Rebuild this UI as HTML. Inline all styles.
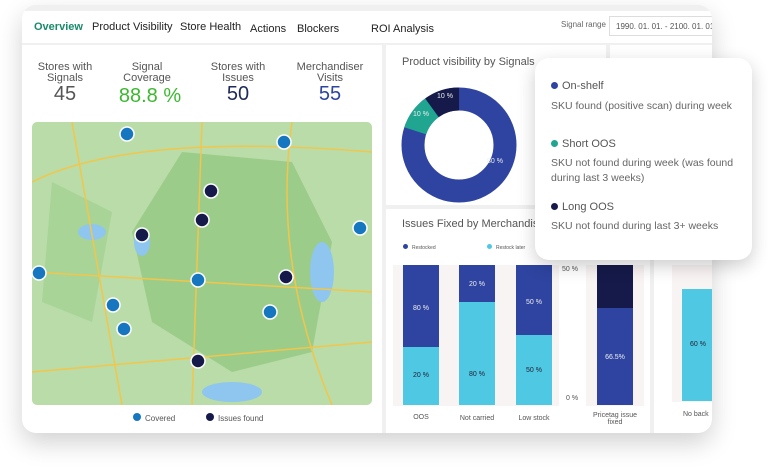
<!DOCTYPE html>
<html><head><style>
*{margin:0;padding:0;box-sizing:border-box}
body{width:768px;height:475px;background:#fff;font-family:"Liberation Sans",sans-serif;position:relative;overflow:hidden}
.card{position:absolute;left:22px;top:5px;width:690px;height:428px;background:#f0f0f0;border-radius:14px;box-shadow:0 10px 25px rgba(0,0,0,.18);overflow:hidden}
.nav{position:absolute;left:0;top:6px;width:690px;height:32px;background:#fff}
.nav span{position:absolute;top:10px;font-size:11px;color:#222}
.p{position:absolute;background:#fff}
.t{position:absolute;font-size:11px;color:#555;text-align:center;line-height:11px}
.n{position:absolute;font-size:20px;text-align:center}
.bl{position:absolute;font-size:7px;color:#eee;text-align:center;width:36px}
.lb{position:absolute;font-size:7px;color:#555;text-align:center}
.pop{position:absolute;left:535px;top:58px;width:217px;height:202px;background:#fff;border-radius:14px;box-shadow:0 6px 18px rgba(0,0,0,.2)}
.pop div{position:absolute;left:16px;font-size:10.5px;color:#666}
.dot{display:inline-block;width:7px;height:7px;border-radius:50%;margin-right:4px}
</style></head><body>
<div class="card">
<div class="nav">
<span style="left:12px;color:#1a8a6a;font-weight:bold">Overview</span>
<span style="left:70px">Product Visibility</span>
<span style="left:158px">Store Health</span>
<span style="left:228px;top:12px">Actions</span>
<span style="left:275px;top:12px">Blockers</span>
<span style="left:349px;top:12px">ROI Analysis</span>
<span style="left:539px;font-size:8px;color:#666;top:9px">Signal range</span>
<div style="position:absolute;left:587px;top:5px;width:110px;height:20px;border:1px solid #ddd;font-size:8px;color:#555;padding:5px 6px;white-space:nowrap;overflow:hidden">1990. 01. 01. - 2100. 01. 01</div>
</div>
<div class="p" style="left:0;top:40px;width:360px;height:390px"></div>
<div class="p" style="left:364px;top:40px;width:220px;height:160px"></div>
<div class="p" style="left:588px;top:40px;width:110px;height:160px"></div>
<div class="p" style="left:364px;top:204px;width:264px;height:230px"></div>
<div class="p" style="left:632px;top:204px;width:70px;height:230px"></div>
</div>
<div class="t" style="left:30px;top:62px;width:70px">Stores with<br>Signals</div>
<div class="n" style="left:30px;top:83px;width:70px;color:#555">45</div>
<div class="t" style="left:112px;top:62px;width:70px">Signal<br>Coverage</div>
<div class="n" style="left:110px;top:85px;width:80px;color:#3cb830">88.8 %</div>
<div class="t" style="left:203px;top:62px;width:70px">Stores with<br>Issues</div>
<div class="n" style="left:203px;top:83px;width:70px;color:#1e2a5a">50</div>
<div class="t" style="left:290px;top:62px;width:80px">Merchandiser<br>Visits</div>
<div class="n" style="left:290px;top:83px;width:80px;color:#2e44a0">55</div>
<svg style="position:absolute;left:32px;top:122px;border-radius:5px" width="340" height="283">
<rect width="340" height="283" fill="#b9dca8"/>
<path d="M150 30 L260 40 L300 120 L280 230 L200 250 L120 200 L100 110Z" fill="#9ccc8a"/>
<path d="M20 60 L80 90 L60 200 L10 180Z" fill="#a8d498"/>
<ellipse cx="290" cy="150" rx="12" ry="30" fill="#8ec6ef"/>
<ellipse cx="200" cy="270" rx="30" ry="10" fill="#8ec6ef"/>
<ellipse cx="60" cy="110" rx="14" ry="8" fill="#8ec6ef"/>
<ellipse cx="110" cy="120" rx="8" ry="14" fill="#8ec6ef"/>
<g stroke="#f2c64a" stroke-width="1.5" fill="none">
<path d="M0 60 Q100 10 340 30"/><path d="M170 0 L160 283"/><path d="M0 150 L340 170"/><path d="M40 0 L90 283"/><path d="M260 0 Q240 140 300 283"/><path d="M0 250 L340 220"/>
</g>
<g stroke="#fff" stroke-width="1.5">
<circle cx="95" cy="12" r="7" fill="#1676c0"/><circle cx="252" cy="20" r="7" fill="#1676c0"/>
<circle cx="179" cy="69" r="7" fill="#161a4a"/><circle cx="170" cy="98" r="7" fill="#161a4a"/>
<circle cx="110" cy="113" r="7" fill="#161a4a"/><circle cx="328" cy="106" r="7" fill="#1676c0"/>
<circle cx="7" cy="151" r="7" fill="#1676c0"/><circle cx="166" cy="158" r="7" fill="#1676c0"/>
<circle cx="254" cy="155" r="7" fill="#161a4a"/><circle cx="81" cy="183" r="7" fill="#1676c0"/>
<circle cx="238" cy="190" r="7" fill="#1676c0"/><circle cx="92" cy="207" r="7" fill="#1676c0"/>
<circle cx="166" cy="239" r="7" fill="#161a4a"/>
</g>
</svg>
<div class="lb" style="left:133px;top:413px;font-size:8px"><span class="dot" style="background:#1676c0;width:8px;height:8px"></span>Covered</div>
<div class="lb" style="left:206px;top:413px;font-size:8px"><span class="dot" style="background:#161a4a;width:8px;height:8px"></span>Issues found</div>
<div style="position:absolute;left:402px;top:56px;font-size:11px;color:#555">Product visibility by Signals</div>
<svg style="position:absolute;left:400px;top:86px" width="120" height="120">
<circle cx="59" cy="59" r="46" fill="none" stroke="#2e44a0" stroke-width="23"/>
<circle cx="59" cy="59" r="46" fill="none" stroke="#1fa590" stroke-width="23" stroke-dasharray="28.9 400" transform="rotate(-162 59 59)"/>
<circle cx="59" cy="59" r="46" fill="none" stroke="#161a4a" stroke-width="23" stroke-dasharray="28.9 400" transform="rotate(-126 59 59)"/>
<text x="37" y="12" font-size="7" fill="#eee" font-family="Liberation Sans">10 %</text>
<text x="13" y="30" font-size="7" fill="#eee" font-family="Liberation Sans">10 %</text>
<text x="87" y="77" font-size="7" fill="#eee" font-family="Liberation Sans">80 %</text>
</svg>
<div style="position:absolute;left:402px;top:218px;font-size:11px;color:#555">Issues Fixed by Merchandiser</div>
<div class="lb" style="left:403px;top:244px;font-size:5px"><span class="dot" style="background:#2e44a0;width:5px;height:5px"></span>Restocked</div>
<div class="lb" style="left:487px;top:244px;font-size:5px"><span class="dot" style="background:#4fc8e4;width:5px;height:5px"></span>Restock later</div>
<div style="position:absolute;left:393px;top:265px;width:166px;height:141px;background:#f9f4f4"></div>
<div style="position:absolute;left:586px;top:265px;width:58px;height:141px;background:#f9f4f4"></div>
<div style="position:absolute;left:672px;top:265px;width:40px;height:137px;background:#f9f4f4"></div>
<div style="position:absolute;left:403px;top:265px;width:36px;height:82px;background:#2e44a0"></div>
<div style="position:absolute;left:403px;top:347px;width:36px;height:58px;background:#4fc8e4"></div>
<div style="position:absolute;left:459px;top:265px;width:36px;height:37px;background:#2e44a0"></div>
<div style="position:absolute;left:459px;top:302px;width:36px;height:103px;background:#4fc8e4"></div>
<div style="position:absolute;left:516px;top:265px;width:36px;height:70px;background:#2e44a0"></div>
<div style="position:absolute;left:516px;top:335px;width:36px;height:70px;background:#4fc8e4"></div>
<div style="position:absolute;left:597px;top:265px;width:36px;height:43px;background:#161a4a"></div>
<div style="position:absolute;left:597px;top:308px;width:36px;height:97px;background:#2e44a0"></div>
<div style="position:absolute;left:682px;top:289px;width:30px;height:112px;background:#4fc8e4"></div>
<div class="bl" style="left:403px;top:305px">80 %</div>
<div class="bl" style="left:403px;top:372px;color:#223">20 %</div>
<div class="bl" style="left:459px;top:281px">20 %</div>
<div class="bl" style="left:459px;top:371px;color:#223">80 %</div>
<div class="bl" style="left:516px;top:299px">50 %</div>
<div class="bl" style="left:516px;top:367px;color:#223">50 %</div>
<div class="bl" style="left:597px;top:354px">66.5%</div>
<div class="bl" style="left:690px;top:341px;color:#223;text-align:left">60 %</div>
<div class="lb" style="left:562px;top:266px">50 %</div>
<div class="lb" style="left:566px;top:395px">0 %</div>
<div class="lb" style="left:403px;top:414px;width:36px">OOS</div>
<div class="lb" style="left:454px;top:415px;width:46px">Not carried</div>
<div class="lb" style="left:510px;top:415px;width:48px">Low stock</div>
<div class="lb" style="left:587px;top:412px;width:56px">Pricetag issue<br>fixed</div>
<div class="lb" style="left:683px;top:411px;width:40px;text-align:left">No back</div>
<div class="pop">
<div style="top:22px;font-size:11px;color:#555"><span class="dot" style="background:#2e44a0"></span>On-shelf</div>
<div style="top:42px">SKU found (positive scan) during week</div>
<div style="top:80px;font-size:11px;color:#555"><span class="dot" style="background:#1fa590"></span>Short OOS</div>
<div style="top:98px;line-height:15px">SKU not found during week (was found<br>during last 3 weeks)</div>
<div style="top:143px;font-size:11px;color:#555"><span class="dot" style="background:#161a4a"></span>Long OOS</div>
<div style="top:162px">SKU not found during last 3+ weeks</div>
</div>
</body></html>
